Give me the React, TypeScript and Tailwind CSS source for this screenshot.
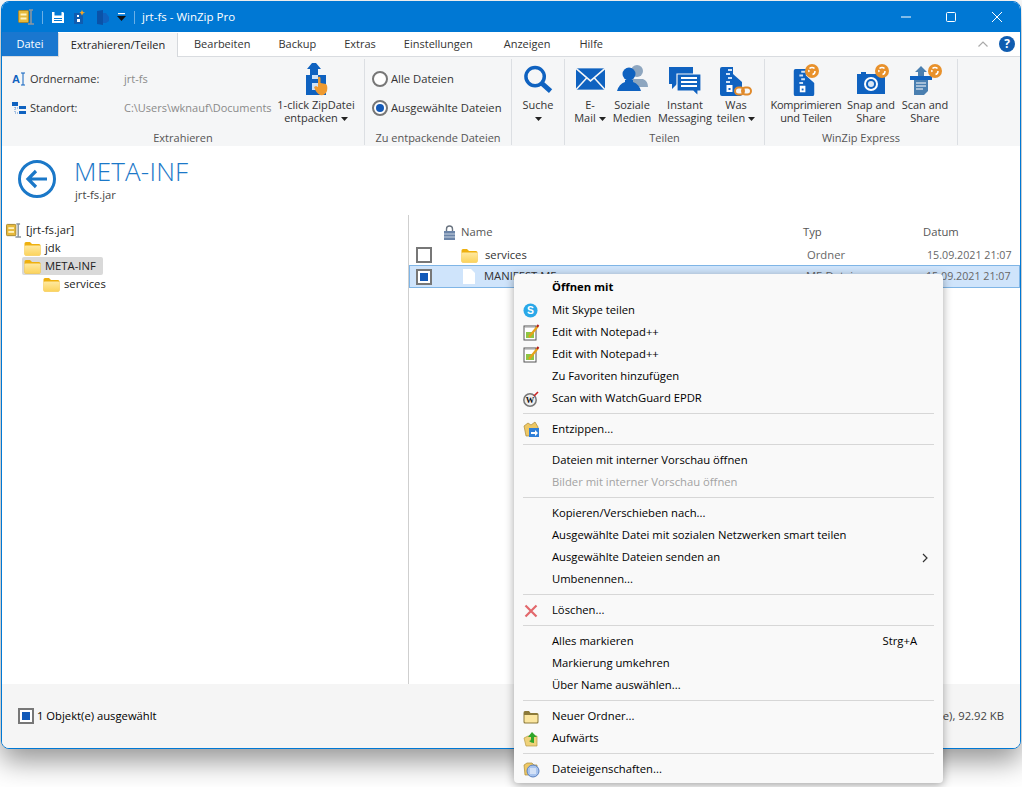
import React from "react";

const Folder = ({ className = "w-[17px] h-[15px]" }: { className?: string }) => (
  <svg viewBox="0 0 17 15" className={className}>
    <defs>
      <linearGradient id="fg" x1="0" y1="0" x2="0" y2="1">
        <stop offset="0" stopColor="#ffe9a0" />
        <stop offset="1" stopColor="#fbd35c" />
      </linearGradient>
    </defs>
    <path d="M0.5 2.5Q0.5 1 2 1H6L8 3H15Q16.5 3 16.5 4.5V13Q16.5 14.5 15 14.5H2Q0.5 14.5 0.5 13Z" fill="#eeb00f" />
    <path d="M0.5 5.5Q0.5 4.5 2 4.5H15Q16.5 4.5 16.5 5.5V13Q16.5 14.5 15 14.5H2Q0.5 14.5 0.5 13Z" fill="url(#fg)" />
  </svg>
);

const Vise = ({ className = "w-[16px] h-[16px]" }: { className?: string }) => (
  <svg viewBox="0 0 16 16" className={className}>
    <rect x="0.5" y="1.5" width="10" height="12" rx="1" fill="#e6b93c" stroke="#a5862f" />
    <rect x="2.5" y="4.5" width="6" height="2" fill="#fff3c0" />
    <rect x="2.5" y="8.5" width="6" height="2" fill="#fff3c0" />
    <path d="M13 1V15M11 1H15M10 15H16" stroke="#8a97a1" strokeWidth="1.6" fill="none" />
  </svg>
);

const Check = ({ on, size = "w-[16px] h-[16px]" }: { on?: boolean; size?: string }) => (
  <span className={`${size} border-2 border-[#777777] bg-white flex items-center justify-center shrink-0`}>
    {on && <span className="w-[8px] h-[8px] bg-[#1259b8]" />}
  </span>
);

const Arrow = () => (
  <svg viewBox="0 0 7 4" className="w-[7px] h-[4px] inline-block">
    <path d="M0 0H7L3.5 4Z" fill="#222" />
  </svg>
);

const OrangeBadge = ({ className }: { className: string }) => (
  <svg viewBox="0 0 14 14" className={`absolute w-[14px] h-[14px] ${className}`}>
    <circle cx="7" cy="7" r="7" fill="#e8912b" />
    <path d="M4.5 4.5A3.5 3.5 0 0 1 9.5 4.5M10 7A3.5 3.5 0 0 1 7.5 10.5M4 8A3.5 3.5 0 0 1 4 6" stroke="#fff" strokeWidth="1.5" fill="none" />
  </svg>
);

const ZipDoc = ({ className = "w-[22px] h-[29px]" }: { className?: string }) => (
  <svg viewBox="0 0 22 29" className={className}>
    <path d="M0 2Q0 0 2 0H13V7L22 15V27Q22 29 20 29H2Q0 29 0 27Z" fill="#0f62c0" />
    <path d="M8 2H12V4H8ZM6 6H10V8H6ZM8 10H12V12H8ZM6 14H10V16H6Z" fill="#cfe2f7" />
    <rect x="6.5" y="18" width="6" height="7" fill="#fff" />
    <rect x="8.5" y="21" width="2" height="2" fill="#0f62c0" />
  </svg>
);

const RibbonBtn = ({ w, icon, l1, l2, arrow, tight }: { w: string; icon: React.ReactNode; l1: string; l2: string; arrow?: boolean; tight?: boolean }) => (
  <div className={`${w} flex flex-col items-center shrink-0`}>
    <div className="h-[37px] flex items-end justify-center">{icon}</div>
    <div className={`mt-[2px] text-center whitespace-nowrap leading-[13px] text-[#333] ${tight ? "tracking-[-0.25px]" : ""}`}>
      <div>{l1}</div>
      <div>
        {l2}
        {arrow && <span className="ml-[3px] align-middle inline-flex"><Arrow /></span>}
      </div>
    </div>
  </div>
);

const Group = ({ w, label, children }: { w: string; label: string; children: React.ReactNode }) => (
  <div className={`${w} h-full shrink-0 flex flex-col border-r border-[#dcdfe3]`}>
    <div className="flex-1 min-h-0">{children}</div>
    <div className="h-[14px] text-center text-[#555] leading-[14px] whitespace-nowrap">{label}</div>
  </div>
);

type Item = { t?: string; icon?: React.ReactNode; bold?: boolean; off?: boolean; sub?: boolean; key2?: string; sep?: boolean };

const Skype = () => (
  <svg viewBox="0 0 16 16" className="w-[15px] h-[15px]">
    <circle cx="8" cy="8" r="7.5" fill="#2aa8e8" />
    <text x="8" y="12" textAnchor="middle" fontSize="11" fontWeight="700" fill="#fff" fontFamily="Liberation Sans, sans-serif">S</text>
  </svg>
);
const Npp = () => (
  <svg viewBox="0 0 17 17" className="w-[17px] h-[17px]">
    <rect x="1" y="2" width="12" height="14" fill="#fff" stroke="#555" />
    <path d="M1.5 3.5H12.5" stroke="#999" strokeDasharray="1 1" />
    <rect x="3" y="8" width="8" height="6" fill="#8fc644" />
    <path d="M6 13L15 2" stroke="#e6a21a" strokeWidth="2.2" />
    <path d="M14 2.8L15.5 1" stroke="#b11c1c" strokeWidth="2" />
  </svg>
);
const Wg = () => (
  <svg viewBox="0 0 16 16" className="w-[16px] h-[16px]">
    <circle cx="7" cy="9" r="6.2" fill="#eee" stroke="#777" strokeWidth="1.5" />
    <text x="7" y="12" textAnchor="middle" fontSize="8.5" fontWeight="700" fill="#111" fontFamily="Liberation Serif, serif">W</text>
    <path d="M11 5L15 1" stroke="#cc2222" strokeWidth="1.6" />
  </svg>
);
const Unzip = () => (
  <svg viewBox="0 0 17 17" className="w-[17px] h-[17px]">
    <path d="M1 5L5 2L8 4L12 1L15 6V15H3Z" fill="#eec865" stroke="#a78a3a" strokeWidth="0.7" />
    <rect x="6" y="7" width="10" height="9" fill="#2f7fd8" />
    <path d="M8 11H12V9L15 12L12 15V13H8Z" fill="#fff" />
  </svg>
);
const RedX = () => (
  <svg viewBox="0 0 14 14" className="w-[14px] h-[14px] ml-[1px]">
    <path d="M1.5 1.5L12.5 12.5M12.5 1.5L1.5 12.5" stroke="#e2686c" strokeWidth="2.2" />
  </svg>
);
const NewF = () => (
  <svg viewBox="0 0 16 14" className="w-[16px] h-[14px]">
    <path d="M0.5 3Q0.5 1 2 1H6L7.5 3H14Q15.5 3 15.5 4.5V12Q15.5 13.5 14 13.5H2Q0.5 13.5 0.5 12Z" fill="#8c7a3a" />
    <path d="M1.5 5H14.5V11.5Q14.5 12.5 13.5 12.5H2.5Q1.5 12.5 1.5 11.5Z" fill="#fbe6a0" />
  </svg>
);
const Up = () => (
  <svg viewBox="0 0 16 16" className="w-[16px] h-[16px]">
    <path d="M1 7L5 5H14V15H3Z" fill="#efd27a" stroke="#b89a45" strokeWidth="0.7" />
    <path d="M9 1L14 6H11V12Q8 12 6 10Q8 10 8 8V6H5Z" fill="#2fa52a" />
  </svg>
);
const Props = () => (
  <svg viewBox="0 0 17 17" className="w-[17px] h-[17px]">
    <path d="M1 4L4 2H9L11 4H14V14H2Z" fill="#eec865" stroke="#a78a3a" strokeWidth="0.7" />
    <circle cx="10" cy="10" r="6" fill="#a8c4ee" stroke="#5a80c0" />
    <path d="M7 8H13M7 10H13M7 12H13" stroke="#fff" />
  </svg>
);

const menu: Item[] = [
  { t: "Öffnen mit", bold: true },
  { t: "Mit Skype teilen", icon: <Skype /> },
  { t: "Edit with Notepad++", icon: <Npp /> },
  { t: "Edit with Notepad++", icon: <Npp /> },
  { t: "Zu Favoriten hinzufügen" },
  { t: "Scan with WatchGuard EPDR", icon: <Wg /> },
  { sep: true },
  { t: "Entzippen...", icon: <Unzip /> },
  { sep: true },
  { t: "Dateien mit interner Vorschau öffnen" },
  { t: "Bilder mit interner Vorschau öffnen", off: true },
  { sep: true },
  { t: "Kopieren/Verschieben nach..." },
  { t: "Ausgewählte Datei mit sozialen Netzwerken smart teilen" },
  { t: "Ausgewählte Dateien senden an", sub: true },
  { t: "Umbenennen..." },
  { sep: true },
  { t: "Löschen...", icon: <RedX /> },
  { sep: true },
  { t: "Alles markieren", key2: "Strg+A" },
  { t: "Markierung umkehren" },
  { t: "Über Name auswählen..." },
  { sep: true },
  { t: "Neuer Ordner...", icon: <NewF /> },
  { t: "Aufwärts", icon: <Up /> },
  { sep: true },
  { t: "Dateieigenschaften...", icon: <Props /> },
];

const tabs = [
  { t: "Bearbeiten", c: "" },
  { t: "Backup", c: "" },
  { t: "Extras", c: "" },
  { t: "Einstellungen", c: "" },
  { t: "Anzeigen", c: "ml-[3px]" },
  { t: "Hilfe", c: "ml-[1px]" },
];

export default function App() {
  return (
    <div className="relative w-[1022px] h-[787px] overflow-hidden bg-white pl-[1px] pt-[1px] text-[11.25px] text-[#222] font-['Open_Sans','Noto_Sans',sans-serif]">
      {/* Window */}
      <div className="w-[1020px] h-[748px] rounded-[8px] border border-[#0078d4] bg-white flex flex-col overflow-hidden shadow-[0_12px_28px_rgba(0,0,0,0.42)]">
        {/* Title bar */}
        <div className="h-[30px] shrink-0 bg-[#0078d4] flex items-center text-white pl-[16px]">
          <Vise />
          <span className="ml-[8px] w-px h-[13px] bg-[#6bb0e6]" />
          <svg viewBox="0 0 12 12" className="w-[12px] h-[12px] ml-[9px]">
            <path d="M0 1H11L12 2V12H0Z" fill="#fff" />
            <rect x="2.5" y="1" width="7" height="3.5" fill="#0078d4" />
            <rect x="2" y="7" width="8" height="1" fill="#0078d4" />
            <rect x="2" y="9" width="8" height="1" fill="#0078d4" />
          </svg>
          <svg viewBox="0 0 12 14" className="w-[12px] h-[14px] ml-[10px]">
            <path d="M0 3H9V14H0Z" fill="#0f5cb0" />
            <rect x="3" y="5" width="2" height="2" fill="#fff" />
            <rect x="3" y="9" width="3" height="3" fill="#fff" />
            <path d="M8 0L9 2L11 2.5L9 3.5L8 5.5L7 3.5L5.5 2.5L7 2Z" fill="#f5a623" />
          </svg>
          <svg viewBox="0 0 12 15" className="w-[12px] h-[15px] ml-[11px]">
            <path d="M0 1L6 0V15L0 14Z" fill="#0a52a8" />
            <path d="M6 3H9L12 7V11L9 13H6Z" fill="#0f62c0" />
          </svg>
          <svg viewBox="0 0 9 8" className="w-[9px] h-[8px] ml-[8px]">
            <rect x="1" y="0" width="7" height="1.2" fill="#fff" />
            <path d="M0 3H9L4.5 8Z" fill="#111" />
          </svg>
          <span className="ml-[8px] w-px h-[13px] bg-[#6bb0e6]" />
          <span className="ml-[7px] text-[11.5px]">jrt-fs - WinZip Pro</span>
          <div className="ml-auto flex items-center">
            <svg viewBox="0 0 10 10" className="w-[10px] h-[10px] mr-[35px]"><path d="M0 5H10" stroke="#fff" /></svg>
            <svg viewBox="0 0 10 10" className="w-[10px] h-[10px] mr-[36px]"><rect x="0.5" y="0.5" width="9" height="9" rx="1" fill="none" stroke="#fff" /></svg>
            <svg viewBox="0 0 10 10" className="w-[10px] h-[10px] mr-[18px]"><path d="M0 0L10 10M10 0L0 10" stroke="#fff" /></svg>
          </div>
        </div>

        {/* Tabs */}
        <div className="h-[24px] shrink-0 flex items-stretch bg-white text-[11px]">
          <div className="w-[56px] bg-[#1a77cf] text-white flex items-center justify-center">Datei</div>
          <div className="w-[120px] mr-[2px] bg-[#f5f6f7] border-x border-[#d5d8dc] flex items-center justify-center whitespace-nowrap relative top-[1px]">Extrahieren/Teilen</div>
          {tabs.map((t) => (
            <div key={t.t} className={`px-[14px] flex items-center whitespace-nowrap text-[#333] ${t.c}`}>{t.t}</div>
          ))}
          <div className="ml-auto flex items-center pr-[5px]">
            <svg viewBox="0 0 10 6" className="w-[10px] h-[6px] mr-[11px]"><path d="M0.5 5.5L5 1L9.5 5.5" stroke="#aaaaaa" fill="none" strokeWidth="1.2" /></svg>
            <span className="w-[16px] h-[16px] rounded-full bg-[#0f5cb0] text-white font-bold text-[12px] flex items-center justify-center leading-none">?</span>
          </div>
        </div>

        {/* Ribbon */}
        <div className="h-[90px] shrink-0 bg-[#f5f6f7] border-t border-[#d9dce0] flex pt-[2px] pb-[1px] text-[11px]">
          <Group w="w-[363px]" label="Extrahieren">
            <div className="flex h-full">
              <div className="w-[274px] pl-[10px] pt-[11px]">
                <div className="flex items-center h-[18px]">
                  <svg viewBox="0 0 14 14" className="w-[14px] h-[14px] mr-[4px] shrink-0">
                    <text x="0" y="11" fontSize="11" fontWeight="700" fill="#0f62c0" fontFamily="Liberation Sans, sans-serif">A</text>
                    <path d="M9 1H13M11 1V13M9 13H13" stroke="#0f62c0" fill="none" />
                  </svg>
                  <span className="w-[94px] shrink-0 text-[#333]">Ordnername:</span>
                  <span className="text-[#8a8a8a]">jrt-fs</span>
                </div>
                <div className="flex items-center h-[18px] mt-[11px]">
                  <svg viewBox="0 0 14 14" className="w-[14px] h-[14px] mr-[4px] shrink-0">
                    <rect x="0" y="1" width="6" height="4" fill="#0f62c0" />
                    <rect x="7" y="5" width="7" height="3" fill="#0f62c0" />
                    <rect x="7" y="10" width="7" height="3" fill="#0f62c0" />
                    <path d="M3 6V12H6M3 7H6" stroke="#5a8fd0" strokeDasharray="1 1" fill="none" />
                  </svg>
                  <span className="w-[94px] shrink-0 text-[#333]">Standort:</span>
                  <span className="text-[#8a8a8a] whitespace-nowrap">C:\Users\wknauf\Documents</span>
                </div>
              </div>
              <RibbonBtn
                w="w-[80px]"
                l1="1-click ZipDatei"
                l2="entpacken"
                arrow
                icon={
                  <svg viewBox="0 0 24 33" className="w-[24px] h-[33px]">
                    <path d="M8 0H12L17 6H14V12H22V32H2V12H6V6H3Z" fill="#0f62c0" />
                    <path d="M8 12H14V16H8ZM8 20H14V27H8Z" fill="#cfe2f7" />
                    <path d="M14 14Q16 13 16.5 15V20L22 21Q24 23 23 28Q21 33 16 32Q12 30 10 24L12 23L14 24Z" fill="#ee9a30" />
                  </svg>
                }
              />
            </div>
          </Group>
          <Group w="w-[147px]" label="Zu entpackende Dateien">
            <div className="pl-[7px] pt-[12px]">
              <div className="flex items-center h-[16px] gap-[3px]">
                <span className="w-[16px] h-[16px] rounded-full border-2 border-[#777] bg-white" />
                <span className="text-[#333] text-[11.25px]">Alle Dateien</span>
              </div>
              <div className="flex items-center h-[16px] gap-[3px] mt-[13px]">
                <span className="w-[16px] h-[16px] rounded-full border-2 border-[#777] bg-white flex items-center justify-center">
                  <span className="w-[8px] h-[8px] rounded-full bg-[#1259b8]" />
                </span>
                <span className="text-[#333] text-[11.25px] whitespace-nowrap">Ausgewählte Dateien</span>
              </div>
            </div>
          </Group>
          <Group w="w-[53px]" label="">
            <div className="flex flex-col items-center">
              <div className="h-[37px] flex items-end">
                <svg viewBox="0 0 30 30" className="w-[30px] h-[29px] mb-[2px]">
                  <circle cx="12" cy="12" r="9.5" fill="none" stroke="#0f62c0" strokeWidth="3.6" />
                  <path d="M19 19L28 27" stroke="#0f62c0" strokeWidth="5" />
                </svg>
              </div>
              <div className="mt-[2px] leading-[13px] text-[#333]">Suche</div>
              <div className="leading-[13px]"><Arrow /></div>
            </div>
          </Group>
          <Group w="w-[200px]" label="Teilen">
            <div className="flex pl-[5px]">
              <RibbonBtn
                w="w-[40px]"
                l1="E-"
                l2="Mail"
                arrow
                icon={
                  <svg viewBox="0 0 30 22" className="w-[29px] h-[22px] mb-[6px]">
                    <rect width="30" height="22" fill="#0f62c0" />
                    <path d="M0 0L15 13L30 0M0 22L11 10M30 22L19 10" stroke="#f5f6f7" strokeWidth="1.6" fill="none" />
                  </svg>
                }
              />
              <RibbonBtn
                w="w-[44px]"
                l1="Soziale"
                l2="Medien"
                icon={
                  <svg viewBox="0 0 31 28" className="w-[31px] h-[28px] mb-[4px]">
                    <circle cx="20" cy="7" r="6" fill="#8ea6bf" />
                    <path d="M14 15H26Q31 17 31 23H18Z" fill="#8ea6bf" />
                    <circle cx="12" cy="10" r="6.5" fill="#0f62c0" />
                    <path d="M8 16V18Q2 20 0 27H24Q22 20 16 18V16Z" fill="#0f62c0" />
                  </svg>
                }
              />
              <RibbonBtn
                w="w-[62px]"
                l1="Instant"
                l2="Messaging"
                icon={
                  <svg viewBox="0 0 32 30" className="w-[32px] h-[30px]">
                    <path d="M0 1H24V18H8L3 23V18H0Z" fill="#0f62c0" />
                    <path d="M8 8H32V25H29V30L24 25H8Z" fill="#0f62c0" stroke="#f5f6f7" strokeWidth="1.2" />
                    <path d="M12 12H28M12 16H28M12 20H28" stroke="#fff" strokeWidth="1.8" />
                  </svg>
                }
              />
              <RibbonBtn
                w="w-[40px]"
                l1="Was"
                l2="teilen"
                arrow
                icon={
                  <span className="relative block w-[32px] h-[29px]">
                    <ZipDoc />
                    <svg viewBox="0 0 18 10" className="absolute right-0 bottom-0 w-[18px] h-[10px]">
                      <rect x="1" y="1.5" width="9" height="7" rx="3.5" fill="#f5f6f7" stroke="#e08a2b" strokeWidth="2" />
                      <rect x="8" y="1.5" width="9" height="7" rx="3.5" fill="none" stroke="#e08a2b" strokeWidth="2" />
                    </svg>
                  </span>
                }
              />
            </div>
          </Group>
          <Group w="w-[193px]" label="WinZip Express">
            <div className="flex pl-[5px]">
              <RibbonBtn
                w="w-[72px]"
                l1="Komprimieren"
                l2="und Teilen"
                tight
                icon={
                  <span className="relative block w-[22px] h-[27px] mr-[4px]">
                    <ZipDoc className="w-[22px] h-[27px]" />
                    <OrangeBadge className="-top-[5px] -right-[4px]" />
                  </span>
                }
              />
              <RibbonBtn
                w="w-[58px]"
                l1="Snap and"
                l2="Share"
                icon={
                  <span className="relative block w-[28px] h-[23px] mb-[2px]">
                    <svg viewBox="0 0 28 23" className="w-[28px] h-[23px]">
                      <path d="M0 3H4V1H9V3H28V23H0Z" fill="#0f62c0" />
                      <circle cx="14" cy="13" r="7" fill="#fff" />
                      <circle cx="14" cy="13" r="5" fill="#0f62c0" />
                      <circle cx="14" cy="13" r="3" fill="#dbe8f5" />
                    </svg>
                    <OrangeBadge className="-top-[7px] -right-[4px]" />
                  </span>
                }
              />
              <RibbonBtn
                w="w-[50px]"
                l1="Scan and"
                l2="Share"
                icon={
                  <span className="relative block w-[24px] h-[30px] mr-[9px]">
                    <svg viewBox="0 0 24 30" className="w-[24px] h-[30px]">
                      <path d="M12 0L18 6H15V10H9V6H6Z" fill="#4a7fb0" />
                      <path d="M1 10H23V14H1Z" fill="#0f62c0" />
                      <path d="M5 14H19V25L15 29H5Z" fill="#4a7fb0" />
                      <path d="M7 17H17M7 20H17M7 23H14" stroke="#fff" />
                    </svg>
                    <OrangeBadge className="-top-[2px] -right-[9px]" />
                  </span>
                }
              />
            </div>
          </Group>
        </div>

        {/* Heading */}
        <div className="h-[69px] shrink-0 flex pl-[16px] pt-[14px] bg-white">
          <svg viewBox="0 0 38 38" className="w-[38px] h-[38px]">
            <circle cx="19" cy="19" r="17.5" fill="none" stroke="#1b78c8" strokeWidth="3" />
            <path d="M29 19H11M18 11L10 19L18 27" fill="none" stroke="#1b78c8" strokeWidth="3.2" />
          </svg>
          <div className="ml-[18px] -mt-[2px]">
            <div className="text-[26px] leading-[26px] font-light text-[#1b78c8] tracking-[0.2px] whitespace-nowrap">META-INF</div>
            <div className="mt-[4px] ml-[1px] leading-[14px] text-[#444]">jrt-fs.jar</div>
          </div>
        </div>

        {/* Panes */}
        <div className="flex-1 min-h-0 flex bg-white">
          <div className="w-[407px] shrink-0 border-r border-[#cfcfcf] pt-[6px] pl-[3px]">
            <div className="flex items-center h-[18px] gap-[5px] pl-[1px]">
              <Vise className="w-[15px] h-[15px]" />
              <span>[jrt-fs.jar]</span>
            </div>
            <div className="flex items-center h-[18px] gap-[4px] pl-[19px]">
              <Folder />
              <span>jdk</span>
            </div>
            <div className="flex items-center h-[18px] gap-[4px] ml-[17px] pl-[2px] w-[81px] bg-[#d9d9d9] rounded-[2px]">
              <Folder />
              <span>META-INF</span>
            </div>
            <div className="flex items-center h-[18px] gap-[4px] pl-[38px]">
              <Folder />
              <span>services</span>
            </div>
          </div>
          <div className="flex-1 min-w-0 pt-[7px]">
            <div className="h-[20px] flex items-center text-[#555]">
              <svg viewBox="0 0 13 15" className="w-[13px] h-[15px] ml-[34px] shrink-0">
                <path d="M3.5 6V4Q3.5 1 6.5 1T9.5 4V6" fill="none" stroke="#6a7480" strokeWidth="1.4" />
                <rect x="1" y="6" width="11" height="9" fill="#6b84a8" />
                <path d="M1 9H12M1 12H12" stroke="#c9d4e2" />
              </svg>
              <span className="ml-[5px] w-[342px] shrink-0">Name</span>
              <span className="w-[120px] shrink-0">Typ</span>
              <span>Datum</span>
            </div>
            <div className="h-[20px] flex items-center mt-[3px] text-[#333]">
              <span className="ml-[7px]"><Check /></span>
              <span className="ml-[29px]"><Folder /></span>
              <span className="ml-[7px] w-[322px] shrink-0">services</span>
              <span className="w-[120px] shrink-0 text-[#666]">Ordner</span>
              <span className="text-[#666] text-[10.7px] whitespace-nowrap">15.09.2021 21:07</span>
            </div>
            <div className="h-[23px] flex items-center bg-[#cfe4fb] border border-[#7fb5e6] text-[#333]">
              <span className="ml-[6px]"><Check on /></span>
              <svg viewBox="0 0 12 15" className="w-[12px] h-[15px] ml-[31px] shrink-0">
                <path d="M0 0H8L12 4V15H0Z" fill="#fff" />
              </svg>
              <span className="ml-[9px] w-[322px] shrink-0 whitespace-nowrap">MANIFEST.MF</span>
              <span className="w-[120px] shrink-0 text-[#666]">MF-Datei</span>
              <span className="text-[#666] text-[10.7px] whitespace-nowrap">15.09.2021 21:07</span>
            </div>
          </div>
        </div>

        {/* Status bar */}
        <div className="h-[64px] shrink-0 bg-[#f5f5f5] flex items-center pl-[16px] pr-[16px]">
          <Check on />
          <span className="ml-[3px] text-black">1 Objekt(e) ausgewählt</span>
          <span className="ml-auto text-[#444]">1 Datei(e), 92.92 KB</span>
        </div>
      </div>

      {/* Context menu */}
      <div className="absolute left-[514px] top-[274px] w-[429px] h-[509px] bg-[#f9f9f9] rounded-[4px] shadow-[0_2px_10px_rgba(0,0,0,0.35)] pt-[2px] text-black">
        {menu.map((m, i) =>
          m.sep ? (
            <div key={i} className="h-[9px] flex items-center px-[9px]">
              <div className="h-px w-full bg-[#d7d7d7]" />
            </div>
          ) : (
            <div key={i} className={`flex items-center relative ${i === 0 ? "h-[23px]" : "h-[22px] pt-[1px]"}`}>
              <span className="w-[38px] pl-[9px] shrink-0 flex items-center">{m.icon}</span>
              <span className={`whitespace-nowrap ${m.bold ? "font-bold" : ""} ${m.off ? "text-[#a3a3a3]" : ""}`}>{m.t}</span>
              {m.key2 && <span className="ml-auto mr-[26px]">{m.key2}</span>}
              {m.sub && (
                <svg viewBox="0 0 6 10" className="ml-auto mr-[15px] w-[6px] h-[10px]">
                  <path d="M1 1L5 5L1 9" fill="none" stroke="#333" strokeWidth="1.2" />
                </svg>
              )}
            </div>
          )
        )}
      </div>
    </div>
  );
}
